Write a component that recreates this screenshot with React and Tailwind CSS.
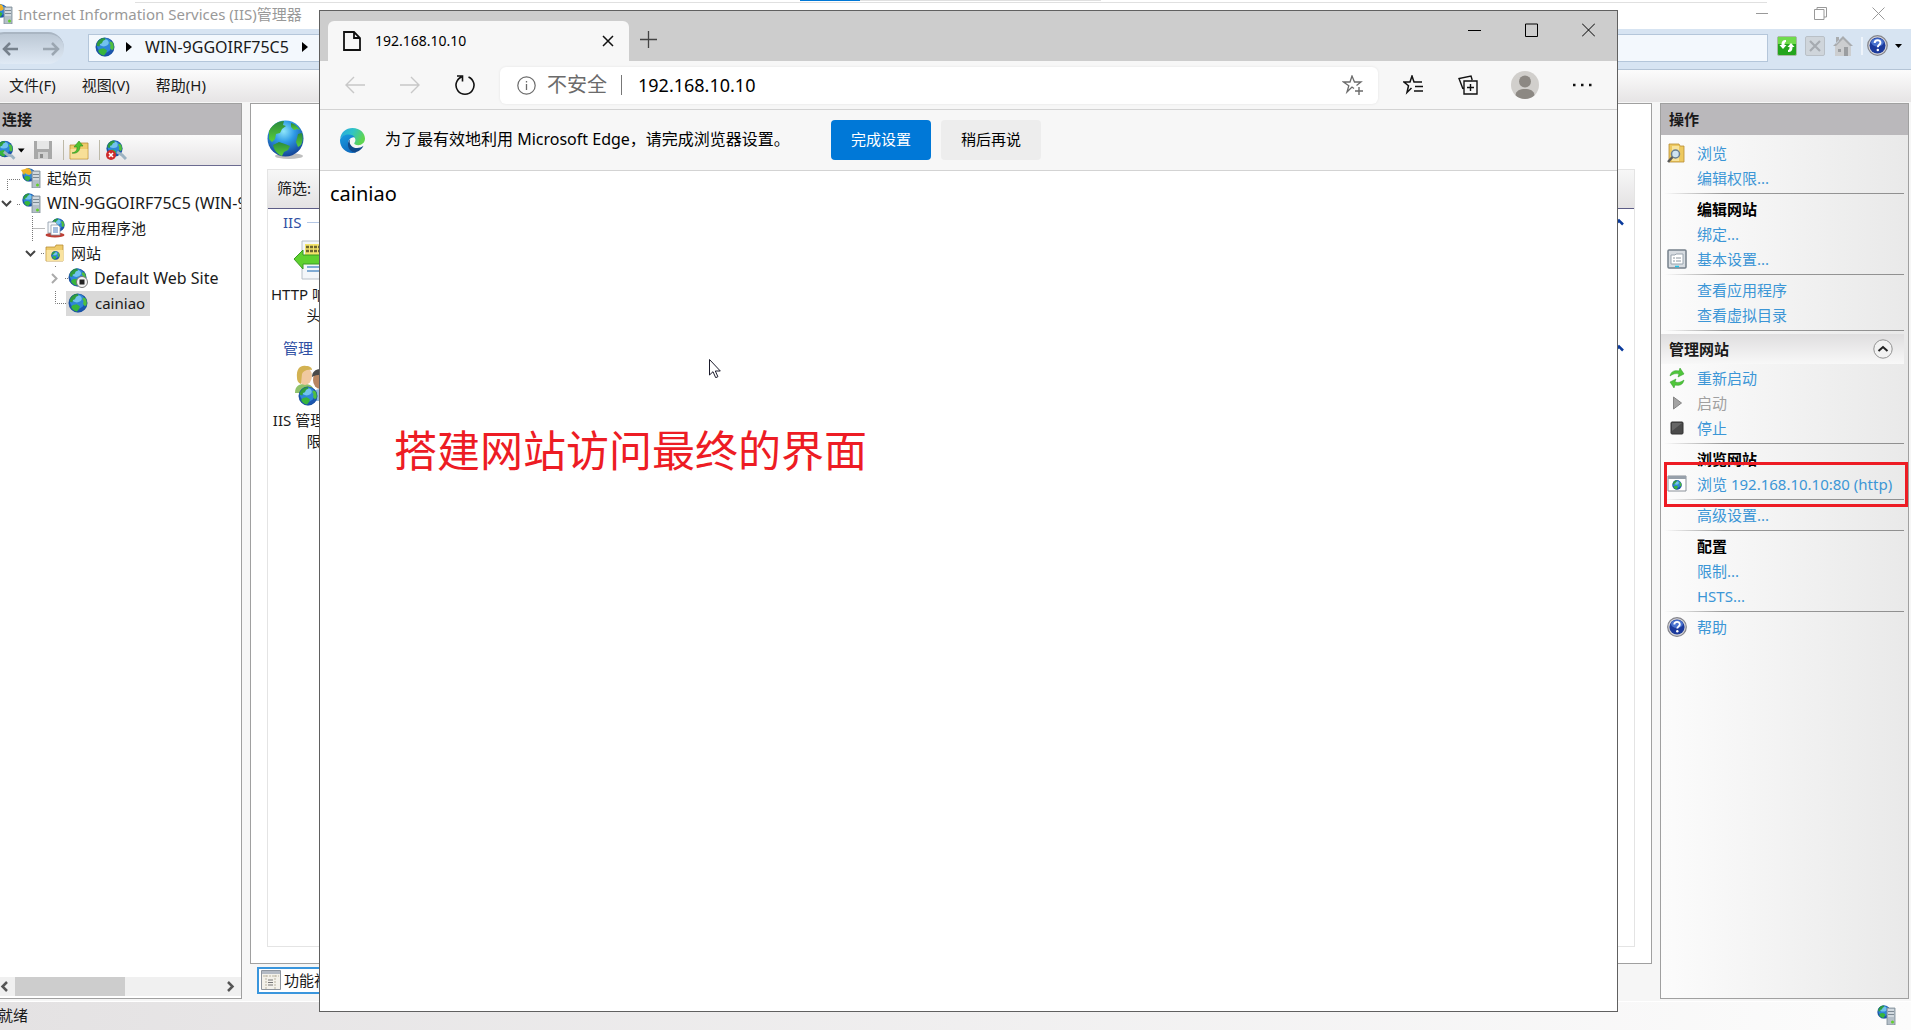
import React from "react";

function GlobeShapes() {
  return (
    <>
      <circle cx="16" cy="16" r="15" fill="#1b56b0" />
      <circle cx="15" cy="13" r="12" fill="#2f86d8" />
      <ellipse cx="14" cy="9" rx="8" ry="6" fill="#7ccdf2" opacity="0.85" />
      <path d="M3 10C5 4 10 1 15 1l2 3-4 2-2 4-3 1-1 4-4-1z" fill="#2f9e3c" />
      <path d="M8 19l6-1 5 3-1 4-4 5c-4-1-8-4-9-8z" fill="#37b53c" />
      <path d="M24 7l4 1c2 3 3 7 2 11l-3 2-3-4 1-4-2-3z" fill="#4fbf3f" />
      <circle cx="16" cy="16" r="14.5" fill="none" stroke="#174a8c" strokeOpacity="0.6" />
    </>
  );
}

function Globe({ className = "size-5" }) {
  return (
    <svg viewBox="0 0 32 32" className={className} aria-hidden="true">
      <GlobeShapes />
    </svg>
  );
}

function BigGlobe() {
  return (
    <svg viewBox="0 0 38 40" className="h-10 w-[38px]" aria-hidden="true">
      <defs>
        <radialGradient id="sea" cx="0.45" cy="0.3" r="0.75">
          <stop offset="0" stopColor="#8fe6fa" />
          <stop offset="0.4" stopColor="#2f9be6" />
          <stop offset="1" stopColor="#123a8e" />
        </radialGradient>
        <linearGradient id="land" x1="0" y1="0" x2="0" y2="1">
          <stop offset="0" stopColor="#2c8a3a" />
          <stop offset="1" stopColor="#58cf3a" />
        </linearGradient>
      </defs>
      <ellipse cx="22" cy="36" rx="14" ry="3" fill="#000" opacity="0.25" />
      <circle cx="18.500" cy="18.500" r="18" fill="url(#sea)" />
      <path d="M2 11C5 5 11 1 17 1l-1 4 3 1-4 3-2 4-4 1-1 5-3 3-3-3z" fill="url(#land)" />
      <path d="M6 25l6-3 6 2 5 2-2 4-4 2-2 4c-5-2-8-6-9-11z" fill="url(#land)" />
      <path d="M24 3c4 1 7 4 9 7l-3-1-3 1-3-3z" fill="url(#land)" />
      <path d="M31 14l4-1c1 4 1 8-1 12l-3 2-2-5z" fill="url(#land)" />
    </svg>
  );
}

function ServerIcon({ star, className = "size-5" }) {
  return (
    <svg viewBox="0 0 20 20" className={className} aria-hidden="true">
      <svg x="1" y="0" width="14" height="14" viewBox="0 0 32 32">
        <GlobeShapes />
      </svg>
      {star && <path d="M0 2l4-1 2-1 3 1 2 4-3 2-4-2-1 2z" fill="#efb127" />}
      <path d="M11 3h8v17h-8z" fill="#b4bfc8" stroke="#7c8a96" strokeWidth="0.8" />
      <path d="M12 5h6M12 8h6M12 11h6" stroke="#eef3f6" strokeWidth="1.2" />
      <path d="M12 6.5h6M12 9.5h6" stroke="#66737e" strokeWidth="0.7" />
      <circle cx="16.5" cy="17" r="1.5" fill="#63d02b" />
    </svg>
  );
}

function PoolIcon() {
  return (
    <svg viewBox="0 0 20 20" className="size-5" aria-hidden="true">
      <svg x="6" y="0" width="14" height="14" viewBox="0 0 32 32">
        <GlobeShapes />
      </svg>
      <ellipse cx="10" cy="17" rx="9.5" ry="2.6" fill="#bd3f35" />
      <path d="M3 4h7l2 2v9H3z" fill="#f4f7fa" stroke="#8c98a5" strokeWidth="0.8" />
      <path d="M6 7h7l2 2v8H6z" fill="#fff" stroke="#8c98a5" strokeWidth="0.8" />
      <path d="M8 10h5M8 12h5M8 14h5" stroke="#4d7fc0" />
    </svg>
  );
}

function SitesIcon() {
  return (
    <svg viewBox="0 0 20 20" className="size-5" aria-hidden="true">
      <path d="M1 4h9l1-2h7v16H1z" fill="#eecb6b" stroke="#b88d35" strokeWidth="0.8" />
      <path d="M1.500 7h17v11h-17z" fill="#f9e3a0" />
      <svg x="6" y="8" width="9" height="9" viewBox="0 0 32 32">
        <GlobeShapes />
      </svg>
    </svg>
  );
}

function StoppedSiteIcon() {
  return (
    <svg viewBox="0 0 20 20" className="size-5" aria-hidden="true">
      <svg x="0" y="0" width="19" height="19" viewBox="0 0 32 32">
        <GlobeShapes />
      </svg>
      <circle cx="14" cy="14" r="5.500" fill="#f4f4f4" stroke="#777" />
      <rect x="11.500" y="11.500" width="5" height="5" fill="#222" />
    </svg>
  );
}

function HelpIcon({ className = "size-5" }) {
  return (
    <svg viewBox="0 0 20 20" className={className} aria-hidden="true">
      <circle cx="10" cy="10" r="9.300" fill="#d5d5d8" stroke="#85858c" strokeWidth="1.2" />
      <circle cx="10" cy="10" r="7.600" fill="#1c3a9c" />
      <ellipse cx="10" cy="7" rx="6" ry="4" fill="#4a73cf" />
      <path d="M7.300 7.600c0-3.600 5.600-3.500 5.500-.2 0 2-2.500 2-2.500 4.200" fill="none" stroke="#fff" strokeWidth="1.900" />
      <circle cx="10.300" cy="14.200" r="1.200" fill="#fff" />
    </svg>
  );
}

function Gutter({ width, children }) {
  return (
    <svg width={width} height="25" viewBox={`0 0 ${width} 25`} className="shrink-0" fill="none" aria-hidden="true">
      {children}
    </svg>
  );
}

const dotted = { stroke: "#777", strokeDasharray: "1 1" };

const treeRows = [
  { label: "起始页", width: 21, icon: <ServerIcon star />, lines: <path d="M20 13.500H7.500V25" {...dotted} /> },
  {
    label: "WIN-9GGOIRF75C5 (WIN-9G",
    latin: true,
    width: 21,
    icon: <ServerIcon />,
    lines: (
      <>
        <path d="M2 10l4.500 4.500L11 10" stroke="#444" strokeWidth="2" />
        <path d="M17 13.500h4" {...dotted} />
      </>
    ),
  },
  { label: "应用程序池", width: 45, icon: <PoolIcon />, lines: <path d="M32.500 0v25M32.500 12.500H45" {...dotted} /> },
  {
    label: "网站",
    width: 45,
    icon: <SitesIcon />,
    lines: (
      <>
        <path d="M26 10l4.500 4.500L35 10" stroke="#444" strokeWidth="2" />
        <path d="M41 12.500h4" {...dotted} />
      </>
    ),
  },
  {
    label: "Default Web Site",
    latin: true,
    width: 68,
    icon: <StoppedSiteIcon />,
    lines: (
      <>
        <path d="M52 8l4.500 4.500L52 17" stroke="#aaa" strokeWidth="2" />
        <path d="M55.500 0v2M65 12.500h4" {...dotted} />
      </>
    ),
  },
  { label: "cainiao", width: 66, selected: true, icon: <Globe className="size-5" />, lines: <path d="M55.500 0v12.500H66" {...dotted} /> },
];

function TreeRow({ row }) {
  return (
    <li className="flex h-[25px] items-center overflow-hidden whitespace-nowrap">
      <Gutter width={row.width}>{row.lines}</Gutter>
      <span
        className={
          row.selected
            ? "flex h-full items-center gap-[7px] bg-[#d9d9d9] pb-[2px] pl-[2px] pr-[5px]"
            : "flex h-full items-center gap-[6px] pb-[2px]"
        }
      >
        {row.icon}
        <span className={row.latin ? "text-[16px]" : "text-[15px]"}>{row.label}</span>
      </span>
    </li>
  );
}

function ConnectionsPanel() {
  return (
    <aside className="flex w-[242px] shrink-0 flex-col border border-l-0 border-[#a0a0a0] bg-white">
      <h2 className="flex h-[31px] items-center bg-[#bab8bb] pb-[2px] pl-[2px] font-bold">连接</h2>
      <div className="flex h-[31px] items-center border-b border-[#6b6b90] bg-gradient-to-b from-[#fbfbfb] to-[#e6e4e5]">
        <button aria-label="连接到服务器" className="flex w-[27px] items-center">
          <svg viewBox="0 0 28 20" className="h-5 w-7">
            <svg x="-4" y="0" width="18" height="18" viewBox="0 0 32 32">
              <GlobeShapes />
            </svg>
            <path d="M4 12l4 3 4 1 3 3" fill="none" stroke="#9db3c2" strokeWidth="3" />
            <path d="M18.500 8.500h7l-3.500 4z" fill="#000" />
          </svg>
        </button>
        <button aria-label="保存" className="ml-[6px]">
          <svg viewBox="0 0 20 20" className="size-5">
            <path d="M1 1h18v18H1z" fill="#a8a8a8" />
            <path d="M4 1h12v8H4z" fill="#e6e6e6" />
            <path d="M5 12h10v7H5z" fill="#d0d0d0" />
            <path d="M7 14h3v4H7z" fill="#8d8d8d" />
          </svg>
        </button>
        <span className="ml-[10px] h-5 w-px bg-[#bdb9a8]" />
        <button aria-label="转到上级" className="ml-[5px]">
          <svg viewBox="0 0 20 20" className="size-5">
            <path d="M1 5h10l1-2h7v16H1z" fill="#eecb6b" stroke="#b88d35" strokeWidth="0.800" />
            <path d="M1.500 9h17v9.500h-17z" fill="#f8df98" />
            <path d="M3 13c5-1 5-4 5-6H5l5-6 4 5h-3c0 5-3 8-8 7z" fill="#4fc22f" stroke="#2c8a1c" strokeWidth="0.600" />
          </svg>
        </button>
        <span className="ml-[10px] h-5 w-px bg-[#bdb9a8]" />
        <button aria-label="删除连接" className="ml-[5px]">
          <svg viewBox="0 0 22 20" className="h-5 w-[22px]">
            <svg x="1" y="0" width="17" height="17" viewBox="0 0 32 32">
              <GlobeShapes />
            </svg>
            <path d="M12 12l5 3 4 4" fill="none" stroke="#9db3c2" strokeWidth="3" />
            <circle cx="6" cy="15" r="5" fill="#cf2b2b" />
            <path d="M4 13l4 4M8 13l-4 4" stroke="#fff" strokeWidth="1.600" />
          </svg>
        </button>
      </div>
      <ul className="flex-1 overflow-hidden">
        {treeRows.map((row) => (
          <TreeRow key={row.label} row={row} />
        ))}
      </ul>
      <div className="mb-[2px] flex h-[19px] items-center bg-[#f0f0f0]">
        <svg width="15" height="19" viewBox="0 0 15 19" fill="none">
          <path d="M7 5L2.500 9.500 7 14" stroke="#555" strokeWidth="2.500" />
        </svg>
        <span className="h-full w-[110px] bg-[#cdcdcd]" />
        <svg width="15" height="19" viewBox="0 0 15 19" fill="none" className="ml-auto">
          <path d="M2 5l4.500 4.500L2 14" stroke="#555" strokeWidth="2.500" />
        </svg>
      </div>
    </aside>
  );
}

function GroupHeading({ children }) {
  return (
    <div className="flex h-[26px] items-center gap-[6px] pl-[15px] pr-[10px] text-[#2f4fa3]">
      <span>{children}</span>
      <span className="h-px flex-1 bg-[#b4c7e4]" />
      <svg width="10" height="8" viewBox="0 0 10 8" fill="none">
        <path d="M1 6.500l4-4 4 4" stroke="#0a3a9c" strokeWidth="2.500" />
      </svg>
    </div>
  );
}

function FeatureItem({ icon, lines }) {
  return (
    <div className="flex h-[100px] w-[92px] flex-col items-center pt-1">
      {icon}
      <div className="mt-[3px] whitespace-nowrap text-center leading-[21px]">
        {lines.map((line) => (
          <div key={line}>{line}</div>
        ))}
      </div>
    </div>
  );
}

function FeaturePanel() {
  return (
    <main className="flex min-w-0 flex-1 flex-col">
      <div className="flex flex-1 flex-col border border-[#a0a0a0] bg-white pb-4 pl-4 pr-4">
        <div className="flex h-[65px] items-center pt-[6px]">
          <BigGlobe />
        </div>
        <div className="flex flex-1 flex-col border border-[#e4e4e4]">
          <div className="flex h-[39px] items-center border-b border-[#5c5c86] bg-gradient-to-b from-[#f7f7f7] to-[#e4e2e3] pb-[2px] pl-[9px]">
            <label htmlFor="filter">筛选:</label>
            <input id="filter" className="ml-2 h-[26px] w-[180px] border border-gray-300 bg-white" />
          </div>
          <GroupHeading>IIS</GroupHeading>
          <FeatureItem
            lines={["HTTP 响应标", "头"]}
            icon={
              <svg viewBox="0 0 42 42" className="size-[42px]">
                <path d="M9 2h32v38H9z" fill="#f3f6f9" stroke="#b8c0c8" />
                <path d="M12 5h28v12H12z" fill="#f3e36a" />
                <path d="M13 8h26M13 12h26" stroke="#6b6430" strokeWidth="2.500" strokeDasharray="3 1" />
                <path d="M14 28h24M14 32h24" stroke="#5b93c8" strokeWidth="1.500" />
                <path d="M1 20l9-9v5h20v9H10v5z" fill="#5fd12f" stroke="#3a9a22" />
              </svg>
            }
          />
          <GroupHeading>管理</GroupHeading>
          <FeatureItem
            lines={["IIS 管理员权", "限"]}
            icon={
              <svg viewBox="0 0 42 42" className="size-[42px]">
                <path d="M2 28c0-8 5-9 10-9s9 2 9 9z" fill="#8fc26a" />
                <ellipse cx="12" cy="11" rx="7" ry="9" fill="#f0c9a0" />
                <path d="M4 13C3 3 8 0 13 1c4 0 6 2 6 4-5-1-9 1-10 4l-1 10c-3-1-4-4-4-6z" fill="#d3b252" />
                <ellipse cx="27" cy="15" rx="7" ry="9" fill="#b98560" />
                <path d="M19 12c0-11 16-10 16 1-4-4-10-4-16-1z" fill="#4a4a4a" />
                <path d="M18 36c0-9 4-12 10-12s10 4 10 12z" fill="#8fb8e0" />
                <svg x="5" y="21" width="20" height="20" viewBox="0 0 32 32">
                  <GlobeShapes />
                </svg>
              </svg>
            }
          />
        </div>
      </div>
      <div className="flex h-[35px] items-start pl-[7px] pt-[3px]">
        <button className="flex h-[27px] items-center gap-[3px] border-2 border-[#3a96dd] bg-white px-[2px] pb-[2px]">
          <svg viewBox="0 0 20 20" className="size-5">
            <path d="M.5.5h19v19H.5z" fill="#f3f1ea" stroke="#8e959e" />
            <path d="M1 1h18v3H1z" fill="#b3bac4" />
            <path d="M2 6h16M5 5v14M14 5v14" stroke="#b9b4a2" strokeDasharray="2 1" />
            <path d="M7 10h5M7 12.500h5M7 15h5" stroke="#777" />
          </svg>
          功能视图
        </button>
      </div>
    </main>
  );
}

const browseIcon = (
  <svg viewBox="0 0 20 20" className="size-5">
    <path d="M2 1h10l1 2h4v16H2z" fill="#edc95f" stroke="#b88d35" strokeWidth="0.800" />
    <path d="M5 3h7v15H5z" fill="#f8e39c" />
    <circle cx="8.500" cy="11" r="4" fill="#cfe4f2" stroke="#6c7f8e" strokeWidth="1.500" />
    <path d="M5.500 14l-4.500 5" stroke="#5a5a5a" strokeWidth="2.500" />
  </svg>
);
const settingsIcon = (
  <svg viewBox="0 0 20 20" className="size-5">
    <rect x="1" y="1" width="18" height="18" rx="1" fill="#d7dce1" stroke="#75808b" strokeWidth="1.500" />
    <path d="M4 6h4l1-1h7v10H4z" fill="#fff" stroke="#98a3ad" />
    <path d="M6 9h2M9 9h5M6 12h2M9 12h5" stroke="#8a949d" />
    <path d="M8 17.500h4" stroke="#25c1e6" strokeWidth="1.500" />
  </svg>
);
const restartIcon = (
  <svg viewBox="0 0 20 20" className="size-5">
    <path d="M3 8c1-5 5-6 9-5l1-3 4 6-6 3 1-3C8 5 6 6 3 8z" fill="#4fc63a" stroke="#2f9a27" strokeWidth="0.500" />
    <path d="M17 12c-1 5-5 6-9 5l-1 3-4-6 6-3-1 3c4 1 6 0 9-2z" fill="#4fc63a" stroke="#2f9a27" strokeWidth="0.500" />
  </svg>
);
const startIcon = (
  <svg viewBox="0 0 20 20" className="size-5">
    <path d="M6.500 4l8 6-8 6z" fill="#a3a3a3" stroke="#858585" />
  </svg>
);
const stopIcon = (
  <svg viewBox="0 0 20 20" className="size-5">
    <rect x="4" y="4" width="12" height="12" rx="1" fill="#4a4a4a" stroke="#333" />
    <path d="M5 5h10L5 13z" fill="#666" />
  </svg>
);
const browseSiteIcon = (
  <svg viewBox="0 0 20 20" className="size-5">
    <path d="M1 2h18v15H1z" fill="#fff" stroke="#8a9199" />
    <path d="M1 2h18v3H1z" fill="#97a0aa" />
    <svg x="5" y="6" width="10" height="10" viewBox="0 0 32 32">
      <GlobeShapes />
    </svg>
  </svg>
);

function ActionLink({ icon, children, highlighted }) {
  return (
    <a href="#" className="relative flex h-[25px] items-center gap-[10px] whitespace-nowrap pb-[2px] pl-[6px] text-[#3c96d6]">
      <span className="w-5">{icon}</span>
      {children}
      {highlighted && <span className="absolute -top-[10px] left-[3px] right-0 z-10 h-[45px] border-[3px] border-[#ed1c24]" />}
    </a>
  );
}

function ActionTitle({ children }) {
  return <h3 className="flex h-[25px] items-center pb-[2px] pl-9 font-bold text-black">{children}</h3>;
}

function Divider() {
  return (
    <div className="h-[6px] pl-[3px] pr-1 pt-[2px]">
      <div className="h-px bg-gradient-to-r from-transparent via-[#999] via-25% to-[#909090]" />
    </div>
  );
}

function ActionsPanel() {
  return (
    <aside className="mr-[2px] flex w-[249px] shrink-0 flex-col border border-[#a0a0a0] bg-gradient-to-r from-[#fcfcfc] to-[#e9e9e9]">
      <h2 className="flex h-[31px] shrink-0 items-center bg-[#bab8bb] pb-[2px] pl-2 font-bold">操作</h2>
      <div className="pt-[6px]">
        <ActionLink icon={browseIcon}>浏览</ActionLink>
        <ActionLink>编辑权限...</ActionLink>
        <Divider />
        <ActionTitle>编辑网站</ActionTitle>
        <ActionLink>绑定...</ActionLink>
        <ActionLink icon={settingsIcon}>基本设置...</ActionLink>
        <Divider />
        <ActionLink>查看应用程序</ActionLink>
        <ActionLink>查看虚拟目录</ActionLink>
        <Divider />
        <div className="mb-[2px] mr-1 flex h-[30px] items-center justify-between bg-gradient-to-b from-[#dfdedf] to-[#f8f8f8] pl-2 pr-[11px]">
          <h3 className="font-bold">管理网站</h3>
          <button aria-label="折叠">
            <svg viewBox="0 0 20 20" className="size-5">
              <circle cx="10" cy="10" r="9.200" fill="#f2f2f2" stroke="#929292" />
              <path d="M5.500 12L10 8l4.500 4" fill="none" stroke="#222" strokeWidth="2" />
            </svg>
          </button>
        </div>
        <ActionLink icon={restartIcon}>重新启动</ActionLink>
        <ActionLink icon={startIcon}>
          <span className="text-[#a0a0a0]">启动</span>
        </ActionLink>
        <ActionLink icon={stopIcon}>停止</ActionLink>
        <Divider />
        <ActionTitle>浏览网站</ActionTitle>
        <ActionLink icon={browseSiteIcon} highlighted>浏览 192.168.10.10:80 (http)</ActionLink>
        <Divider />
        <ActionLink>高级设置...</ActionLink>
        <Divider />
        <ActionTitle>配置</ActionTitle>
        <ActionLink>限制...</ActionLink>
        <ActionLink>HSTS...</ActionLink>
        <Divider />
        <ActionLink icon={<HelpIcon />}>帮助</ActionLink>
      </div>
    </aside>
  );
}

function ManagerTitleBar() {
  return (
    <header className="flex h-[29px] items-center bg-white pb-[2px] text-[#999]">
      <div className="flex w-[18px] justify-end overflow-hidden pr-[5px]">
        <ServerIcon star className="size-5 shrink-0" />
      </div>
      <h1 className="whitespace-nowrap">Internet Information Services (IIS)管理器</h1>
      <div className="ml-auto flex items-center gap-[45px] pr-[26px]">
        <button aria-label="最小化">
          <svg width="13" height="13" viewBox="0 0 13 13"><path d="M0 6.500h12" stroke="#999" /></svg>
        </button>
        <button aria-label="还原">
          <svg width="13" height="13" viewBox="0 0 13 13" fill="none"><path d="M.5 2.500h9.500v10H.5zM3 2.500v-2h9.500v9.500H10" stroke="#999" /></svg>
        </button>
        <button aria-label="关闭">
          <svg width="13" height="13" viewBox="0 0 13 13"><path d="M.5.5l12 12M12.500.5l-12 12" stroke="#999" /></svg>
        </button>
      </div>
    </header>
  );
}

function ManagerAddressBar() {
  return (
    <nav className="flex h-[41px] items-center border-b border-[#b4c4d6] bg-[#d7e4f2] pb-[2px]">
      <div className="-ml-3 flex h-[32px] w-[76px] items-center justify-between rounded-full border-t-2 border-[#a9b5c2] bg-gradient-to-b from-[#bcc8d5] to-[#e0eaf5] pl-[14px] pr-1">
        <svg width="17" height="14" viewBox="0 0 17 14" fill="none"><path d="M16 7H2M8 1L2 7l6 6" stroke="#76818c" strokeWidth="2.500" /></svg>
        <svg width="17" height="14" viewBox="0 0 17 14" fill="none"><path d="M0 7h14M9 1l6 6-6 6" stroke="#9ba6b1" strokeWidth="2.500" /></svg>
      </div>
      <div className="ml-6 flex h-[28px] min-w-0 flex-1 items-center border border-[#b4c6da] bg-[#f3f8fd] pb-[2px] pl-[6px]">
        <Globe className="size-5" />
        <svg width="6" height="10" viewBox="0 0 6 10" className="ml-[11px]"><path d="M0 0l6 5-6 5z" /></svg>
        <span className="ml-[13px] text-[16px]">WIN-9GGOIRF75C5</span>
        <svg width="6" height="10" viewBox="0 0 6 10" className="ml-[13px]"><path d="M0 0l6 5-6 5z" /></svg>
      </div>
      <div className="ml-[9px] flex items-center gap-2 pb-[5px] pr-[9px]">
        <button aria-label="刷新">
          <svg viewBox="0 0 20 20" className="size-5">
            <rect x="0.500" y="0.500" width="19" height="19" rx="1.500" fill="#23a51d" stroke="#a9b9a7" />
            <path d="M1 1h18v7H1z" fill="#6fdb4c" />
            <path d="M9 4C6 4 4.500 5 4.500 9H2.500l3.500 4 3.500-4H7.500C7.500 7 8 6 9 6zM11 16c3 0 4.500-1 4.500-5h2L14 7l-3.500 4h2c0 2-.5 3-1.500 3z" fill="#fff" />
          </svg>
        </button>
        <button aria-label="停止加载">
          <svg viewBox="0 0 20 20" className="size-5">
            <rect x="0.500" y="0.500" width="19" height="19" rx="1.500" fill="#cfd5db" stroke="#b9c0c7" />
            <path d="M5 5l10 10M15 5L5 15" stroke="#a6abb1" strokeWidth="2.200" />
          </svg>
        </button>
        <button aria-label="主页">
          <svg viewBox="0 0 20 20" className="size-5">
            <path d="M2 9v11h16V9l-8-7z" fill="#ccced0" />
            <path d="M10 0L0 10h3l7-7 7 7h3zM3 1h3v4L3 8z" fill="#a9acaf" />
            <path d="M5 13h3v3H5zM11 11h4v9h-4z" fill="#9b9ea1" />
          </svg>
        </button>
        <span className="h-[18px] w-[2px] bg-[#eef4fb]" />
        <button aria-label="帮助" className="-ml-1 flex items-center gap-[7px]">
          <HelpIcon className="size-[21px]" />
          <svg width="7" height="4" viewBox="0 0 7 4"><path d="M0 0h7L3.500 4z" /></svg>
        </button>
      </div>
    </nav>
  );
}

function EdgeLogo() {
  return (
    <svg viewBox="0 0 256 256" className="size-[25px]" aria-hidden="true">
      <defs>
        <linearGradient id="edgeTop" x1="0" y1="0" x2="1" y2="0.400">
          <stop offset="0" stopColor="#2aa5e0" />
          <stop offset="0.500" stopColor="#2fc3c8" />
          <stop offset="1" stopColor="#5fd550" />
        </linearGradient>
        <linearGradient id="edgeMid" x1="0" y1="0" x2="0.500" y2="1">
          <stop offset="0" stopColor="#1a9de0" />
          <stop offset="1" stopColor="#0f6cc0" />
        </linearGradient>
      </defs>
      <path d="M2 112C8 45 62 0 128 0c80 0 128 56 128 108 0 42-32 68-68 68-30 0-42-12-42-18s12-14 12-34c0-26-26-50-62-50C52 74 14 90 2 112z" fill="url(#edgeTop)" />
      <path d="M0 128c0-34 40-62 88-62 32 0 54 12 66 30-50-10-78 34-66 78 10 38 42 66 80 74-14 6-26 8-40 8C56 256 0 198 0 128z" fill="url(#edgeMid)" />
      <path d="M106 112c-14 28-6 66 30 84 34 17 74 8 104-14-18 40-58 66-92 68-62-10-92-92-42-138z" fill="#114a8b" />
    </svg>
  );
}

function EdgeWindow() {
  return (
    <section className="absolute bottom-[18px] left-[319px] right-[293px] top-[10px] z-20 flex flex-col border border-[#606060] bg-white text-black">
      <div className="flex h-[50px] shrink-0 items-end bg-[#cdcdcd] pl-2">
        <div className="flex h-10 w-[301px] items-center rounded-t-md bg-[#f7f7f7] pl-[15px] pr-[15px]">
          <svg width="18" height="20" viewBox="0 0 18 20" fill="none">
            <path d="M1 1h10l6 6v12H1zM11 1v6h6" stroke="#111" strokeWidth="1.800" />
          </svg>
          <span className="ml-[14px] flex-1 text-[14px]">192.168.10.10</span>
          <button aria-label="关闭标签页">
            <svg width="12" height="12" viewBox="0 0 12 12"><path d="M1 1l10 10M11 1L1 11" stroke="#111" strokeWidth="1.500" /></svg>
          </button>
        </div>
        <button aria-label="新建标签页" className="mb-[13px] ml-[11px]">
          <svg width="17" height="17" viewBox="0 0 17 17"><path d="M8.500 0v17M0 8.500h17" stroke="#444" strokeWidth="1.300" /></svg>
        </button>
        <div className="mb-[24px] ml-auto flex gap-11 self-end pr-[22px]">
          <button aria-label="最小化窗口">
            <svg width="13" height="14" viewBox="0 0 13 14"><path d="M0 7.500h13" stroke="#000" /></svg>
          </button>
          <button aria-label="最大化窗口">
            <svg width="13" height="14" viewBox="0 0 13 14" fill="none"><path d="M.5 1h12v12.500H.5z" stroke="#000" /></svg>
          </button>
          <button aria-label="关闭窗口">
            <svg width="13" height="14" viewBox="0 0 13 14"><path d="M0 .5l13 13M13 .5L0 13.500" stroke="#000" /></svg>
          </button>
        </div>
      </div>

      <div className="flex h-[49px] shrink-0 items-center border-b border-[#d3d3d3] bg-[#f7f7f7]">
        <div className="flex items-center gap-[35px] pl-[25px]">
          <button aria-label="后退">
            <svg width="20" height="18" viewBox="0 0 20 18" fill="none"><path d="M20 9H1M9 1L1 9l8 8" stroke="#c8c8c8" strokeWidth="1.400" /></svg>
          </button>
          <button aria-label="前进">
            <svg width="20" height="18" viewBox="0 0 20 18" fill="none"><path d="M0 9h19M11 1l8 8-8 8" stroke="#c8c8c8" strokeWidth="1.400" /></svg>
          </button>
          <button aria-label="重新加载">
            <svg width="20" height="20" viewBox="0 0 20 20" fill="none">
              <path d="M13.500 1.900A9 9 0 1 1 6.500 1.900M2 1h5.500v5.500" stroke="#111" strokeWidth="1.600" />
            </svg>
          </button>
        </div>
        <div className="ml-[25px] flex h-[37px] min-w-0 flex-1 items-center rounded-md bg-white pl-[17px] pr-[15px] shadow-[0_0_3px_rgba(0,0,0,0.08)]">
          <svg width="19" height="19" viewBox="0 0 19 19" fill="none">
            <circle cx="9.500" cy="9.500" r="8.700" stroke="#6b6b6b" strokeWidth="1.200" />
            <path d="M9.500 8v6M9.500 5v1.500" stroke="#6b6b6b" strokeWidth="1.300" />
          </svg>
          <span className="ml-[11px] text-[20px] text-[#6b6b6b]">不安全</span>
          <span className="ml-[14px] h-5 w-px bg-[#777]" />
          <input aria-label="地址" defaultValue="192.168.10.10" className="ml-4 min-w-0 flex-1 text-[18px] outline-none" />
          <button aria-label="添加到收藏夹">
            <svg width="21" height="20" viewBox="0 0 21 20" fill="none">
              <path d="M12 13.500l-2-1.500-5 5 1.800-6.300L1.500 7H8l2-6 2.500 6H19l-4.500 3.500" stroke="#6b6b6b" strokeWidth="1.300" />
              <path d="M17 12v8M13 16h8" stroke="#6b6b6b" strokeWidth="1.400" />
            </svg>
          </button>
        </div>
        <div className="ml-[25px] flex items-center pr-[25px]">
          <button aria-label="收藏夹">
            <svg width="20" height="20" viewBox="0 0 20 20" fill="none">
              <path d="M8.500 13L4 17.500l1.500-6.800L1 7h6l2-6 2 6h8M12 11.500h8M11 16h9" stroke="#111" strokeWidth="1.500" />
            </svg>
          </button>
          <button aria-label="集锦" className="ml-[35px]">
            <svg width="20" height="20" viewBox="0 0 20 20" fill="none">
              <path d="M6 6h13v13H6zM12.500 9v7M9 12.500h7M5 14L1 3.500 13 1l1.200 4" stroke="#111" strokeWidth="1.400" />
            </svg>
          </button>
          <button aria-label="个人资料" className="ml-[33px]">
            <svg width="28" height="28" viewBox="0 0 28 28">
              <circle cx="14" cy="14" r="14" fill="#d1cfcc" />
              <circle cx="14" cy="10.500" r="6" fill="#8c8883" />
              <path d="M4.500 24.200C5 19.500 9 18 14 18s9 1.500 9.500 6.200A14 14 0 0 1 4.500 24.200z" fill="#8c8883" />
            </svg>
          </button>
          <button aria-label="设置及其他" className="ml-[34px]">
            <svg width="19" height="4" viewBox="0 0 19 4"><path d="M0 .7h2.500v2.500H0zM8 .7h2.500v2.500H8zM16 .7h2.500v2.500H16z" fill="#111" /></svg>
          </button>
        </div>
      </div>

      <div className="flex h-[61px] shrink-0 items-center border-b border-[#d3d3d3] bg-[#f7f7f7] pl-5">
        <EdgeLogo />
        <p className="ml-5 w-[446px] whitespace-nowrap pb-[2px] text-[16px]">
          为了最有效地利用 Microsoft Edge，请完成浏览器设置。
        </p>
        <button className="h-10 w-[100px] rounded-sm bg-[#0078d7] pb-[2px] text-[15px] text-white">完成设置</button>
        <button className="ml-[10px] h-10 w-[100px] rounded-sm bg-[#ededed] pb-[2px] text-[15px]">稍后再说</button>
      </div>

      <div className="relative flex-1 pl-[10px] pt-[9px]">
        <p className="text-[20px] leading-[28px]">cainiao</p>
        <p className="ml-[64px] mt-[211px] text-[43px] leading-[64px] text-[#ed1c24]">搭建网站访问最终的界面</p>
        <svg viewBox="0 0 12 19" className="absolute left-[389px] top-[188px] h-[19px] w-3" aria-hidden="true">
          <path d="M.5.500v15.500l3.500-3.300 2.700 6 2.200-1-2.600-5.700h5z" fill="#fff" stroke="#1b1b2b" />
        </svg>
      </div>
    </section>
  );
}

export default function App() {
  return (
    <div className="relative flex min-h-screen flex-col overflow-hidden bg-[#f6f6f6] font-['Noto_Sans','Noto_Sans_CJK_SC',sans-serif] text-[15px] leading-[20px] text-[#1a1a1a]">
      <div className="absolute left-[135px] right-[144px] top-0 h-[3px] border-b border-[#e0e0e0]">
        <div className="ml-[665px] flex h-px">
          <span className="w-[60px] bg-[#0078d7]" />
          <span className="w-[241px] bg-[#e0e0e0]" />
        </div>
      </div>
      <ManagerTitleBar />
      <ManagerAddressBar />
      <div className="flex h-8 items-center gap-[26px] bg-gradient-to-b from-[#fcfcfc] to-[#e6e4e5] pb-[2px] pl-[9px]">
        <button>文件(F)</button>
        <button>视图(V)</button>
        <button>帮助(H)</button>
      </div>
      <div className="flex flex-1 gap-2 pb-[2px] pt-px">
        <ConnectionsPanel />
        <FeaturePanel />
        <ActionsPanel />
      </div>
      <footer className="flex h-[29px] items-center justify-between border-t border-white bg-gradient-to-r from-[#e4e2e3] to-[#fcfcfc] pb-[2px] pr-[15px]">
        <span className="-ml-[2px]">就绪</span>
        <ServerIcon />
      </footer>
      <EdgeWindow />
    </div>
  );
}
